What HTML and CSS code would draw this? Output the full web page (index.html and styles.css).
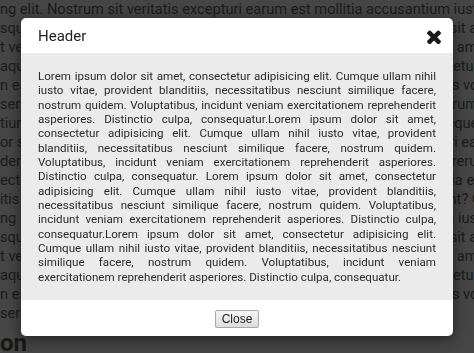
FILE: index.html
```html
<!DOCTYPE html>
<html lang="en">
<head>
<meta charset="utf-8">
<title>Modal</title>
<link rel="stylesheet" href="styles.css">
</head>
<body>
<div class="page">
  <p class="bg-line">ng elit. Nostrum sit veritatis excepturi earum est mollitia accusantium iusto</p>
  <p class="bg-line"><span>sque</span><span>sit am</span></p>
  <p class="bg-line"><span>t ve</span><span>t amet</span></p>
  <p class="bg-line"><span>aqu</span><span>tetur a</span></p>
  <p class="bg-line"><span>n es</span><span>s volu</span></p>
  <p class="bg-line"><span>seru</span><span>rum q</span></p>
  <p class="bg-line"><span>tium</span><span>eque n</span></p>
  <p class="bg-line"><span>or s</span><span>ri earu</span></p>
  <p class="bg-line"><span>deri</span><span>, rerum</span></p>
  <p class="bg-line"><span>ecte</span><span>itia eos</span></p>
  <p class="bg-line"><span>itis</span><span>nt? Qu</span></p>
  <p class="bg-line"><span>ng</span><span>n iusto</span></p>
  <p class="bg-line"><span>sque</span><span>sit am</span></p>
  <p class="bg-line"><span>t ve</span><span>t amet</span></p>
  <p class="bg-line"><span>aqu</span><span>tetur a</span></p>
  <p class="bg-line"><span>n es</span><span>s volu</span></p>
  <p class="bg-line"><span>seru</span><span></span></p>
  <h2 class="bg-heading">on</h2>
</div>

<div class="overlay">
  <div class="modal">
    <div class="modal-header">
      <h3 class="modal-title">Header</h3>
      <button class="close-x" aria-label="Close">
        <svg viewBox="110 330 1188 1196" width="14" height="14" aria-hidden="true">
          <path fill="#1b1b1b" d="M1298 1322q0 40-28 68l-136 136q-28 28-68 28t-68-28l-294-294-294 294q-28 28-68 28t-68-28l-136-136q-28-28-28-68t28-68l294-294-294-294q-28-28-28-68t28-68l136-136q28-28 68-28t68 28l294 294 294-294q28-28 68-28t68 28l136 136q28 28 28 68t-28 68l-294 294 294 294q28 28 28 68z"/>
        </svg>
      </button>
    </div>
    <div class="modal-body">
      <p>Lorem ipsum dolor sit amet, consectetur adipisicing elit. Cumque ullam nihil iusto vitae, provident blanditiis, necessitatibus nesciunt similique facere, nostrum quidem. Voluptatibus, incidunt veniam exercitationem reprehenderit asperiores. Distinctio culpa, consequatur.Lorem ipsum dolor sit amet, consectetur adipisicing elit. Cumque ullam nihil iusto vitae, provident blanditiis, necessitatibus nesciunt similique facere, nostrum quidem. Voluptatibus, incidunt veniam exercitationem reprehenderit asperiores. Distinctio culpa, consequatur. Lorem ipsum dolor sit amet, consectetur adipisicing elit. Cumque ullam nihil iusto vitae, provident blanditiis, necessitatibus nesciunt similique facere, nostrum quidem. Voluptatibus, incidunt veniam exercitationem reprehenderit asperiores. Distinctio culpa, consequatur.Lorem ipsum dolor sit amet, consectetur adipisicing elit. Cumque ullam nihil iusto vitae, provident blanditiis, necessitatibus nesciunt similique facere, nostrum quidem. Voluptatibus, incidunt veniam exercitationem reprehenderit asperiores. Distinctio culpa, consequatur.</p>
    </div>
    <div class="modal-footer">
      <button class="btn">Close</button>
    </div>
  </div>
</div>
</body>
</html>
```

FILE: styles.css
```css
html, body {
  margin: 0;
  padding: 0;
  height: 100%;
  overflow: hidden;
}

body {
  background: #4b4b4b;
  color: #1d1d1d;
  font-family: Roboto, "Noto Sans", sans-serif;
}

.page {
  width: 490px;
}

.bg-line {
  margin: 0;
  height: 19px;
  line-height: 19px;
  font-size: 14.6px;
  white-space: nowrap;
  overflow: hidden;
  display: flex;
  justify-content: space-between;
}

.bg-heading {
  margin: 6px 0 0;
  font-size: 24px;
  line-height: 28px;
  font-weight: 700;
  color: #1a1a1a;
}

.overlay {
  position: fixed;
  inset: 0;
  display: flex;
  align-items: flex-start;
  justify-content: flex-start;
  padding: 18px 21px;
  background: rgba(0, 0, 0, 0.08);
}

.modal {
  width: 432px;
  background: #fff;
  border-radius: 5px;
  box-shadow: 0 3px 14px rgba(0, 0, 0, 0.55);
  overflow: hidden;
}

.modal-header {
  height: 35px;
  padding: 0 12px 0 17px;
  display: flex;
  align-items: center;
  justify-content: space-between;
}

.modal-title {
  margin: 0;
  font-size: 15px;
  font-weight: 400;
  color: #222;
}

.close-x {
  border: 0;
  background: none;
  padding: 0;
  width: 14px;
  height: 14px;
  margin-top: 2px;
  display: flex;
}

.modal-body {
  background: #ebebeb;
  padding: 16px 17px 16px;
}

.modal-body p {
  margin: 0;
  font-size: 11.6px;
  line-height: 14.35px;
  color: #2a2a2a;
  text-align: justify;
}

.modal-footer {
  height: 36px;
  display: flex;
  align-items: center;
  justify-content: center;
}

.btn {
  font-family: "Liberation Sans", Arial, sans-serif;
  font-size: 12px;
  color: #222;
  height: 18px;
  padding: 0 6px;
  border: 1px solid #a8a8a8;
  border-radius: 2px;
  background: linear-gradient(#f7f7f7, #dcdcdc);
  margin-top: 1px;
}
```
